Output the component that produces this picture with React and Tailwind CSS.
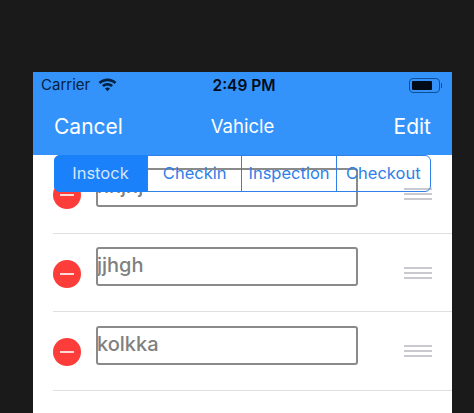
import React from 'react';

const font = "font-['Inter','Liberation_Sans',sans-serif]";

const tabs = ['Checkin', 'Inspection', 'Checkout'];
const rows = [
  { name: 'hhjhj', height: 'h-[79px]', inputTop: 'mt-[13px]' },
  { name: 'jjhgh', height: 'h-[78px]', inputTop: 'mt-[13px]' },
  { name: 'kolkka', height: 'h-[79px]', inputTop: 'mt-[14px]' },
];

const Wifi = () => (
  <svg width="19" height="14" viewBox="0 0 19 14" className="ml-2 -mt-[2px]">
    <path d="M9.5 0.5C6 0.5 3 1.8 0.6 4l1.8 1.9C4.3 4.2 6.8 3.2 9.5 3.2s5.2 1 7.1 2.7L18.4 4C16 1.8 13 0.5 9.5 0.5z" fill="#04213f" />
    <path d="M9.5 5.1c-2.1 0-4 .8-5.5 2.1l1.9 1.9c1-.9 2.2-1.4 3.6-1.4s2.6.5 3.6 1.4L15 7.2c-1.5-1.3-3.4-2.1-5.5-2.1z" fill="#04213f" />
    <path d="M9.5 9.6c-1 0-1.9.4-2.5 1l2.5 2.6 2.5-2.6c-.6-.6-1.5-1-2.5-1z" fill="#04213f" />
  </svg>
);

const Battery = () => (
  <div className="flex items-center">
    <div className="w-[31px] h-[15px] rounded-[4px] border border-[#0f4f96] p-[2px]">
      <div className="w-[20px] h-full rounded-[1px] bg-[#020c18]" />
    </div>
    <div className="w-[1px] h-[5px] ml-[1px] bg-[#0f4f96]" />
  </div>
);

const Row = ({ name, height, inputTop }) => (
  <div className={`${height} ml-[20px] flex border-b border-[#e0e0e2]`}>
    <div className="w-[28px] h-[28px] mt-[26px] rounded-full bg-[#fc3d39] flex items-center justify-center shrink-0">
      <div className="w-[14px] h-[1.5px] bg-[#ffd9d8]" />
    </div>
    <div className={`${inputTop} ml-[15px] w-[262px] h-[39px] rounded-[3px] border-2 border-[#8a8a8a] leading-[33px] text-[20px] font-medium text-[#808080] overflow-hidden`}>
      <span className="-ml-[1px]">{name}</span>
    </div>
    <div className="ml-[46px] mt-[33px] w-[28px] flex flex-col gap-[3px]">
      <div className="h-[2px] bg-[#c9c9cf]" />
      <div className="h-[2px] bg-[#c9c9cf]" />
      <div className="h-[2px] bg-[#c9c9cf]" />
    </div>
  </div>
);

const App = () => {
  return (
    <div className={`${font} w-[474px] h-[413px] overflow-hidden bg-[#1a1a1a] pt-[72px] pl-[33px]`}>
      <div className="relative w-[419px] h-[341px] bg-white">
        <div className="h-[83px] bg-[#3393fb]">
          <div className="h-[27px] pl-[8px] pr-[10px] grid grid-cols-3 items-center text-[#04213f]">
            <div className="flex items-center text-[15px]">
              <span>Carrier</span>
              <Wifi />
            </div>
            <span className="pl-[5px] text-center whitespace-nowrap font-semibold text-[15.5px] text-[#020c18]">2:49 PM</span>
            <div className="flex justify-end">
              <Battery />
            </div>
          </div>
          <div className="h-[56px] px-[21px] grid grid-cols-3 items-center text-white">
            <span className="text-[21px]">Cancel</span>
            <span className="text-center text-[18.5px]">Vahicle</span>
            <span className="text-right text-[21px]">Edit</span>
          </div>
        </div>

        {rows.map((row) => (
          <Row key={row.name} {...row} />
        ))}

        <div className="absolute left-[21px] top-[83px] w-[377px] h-[37px] flex rounded-[6px] border border-[#2f80e8] text-[16.5px] text-[#2f80e8]">
          <div className="w-[93px] -m-px mr-0 rounded-l-[6px] bg-[#1a81fb] text-[#d5e6fb] flex items-center justify-center">
            Instock
          </div>
          {tabs.map((tab) => (
            <div key={tab} className="flex-1 border-l border-[#2f80e8] flex items-center justify-center">
              {tab}
            </div>
          ))}
        </div>
      </div>
    </div>
  );
};

export default App;
